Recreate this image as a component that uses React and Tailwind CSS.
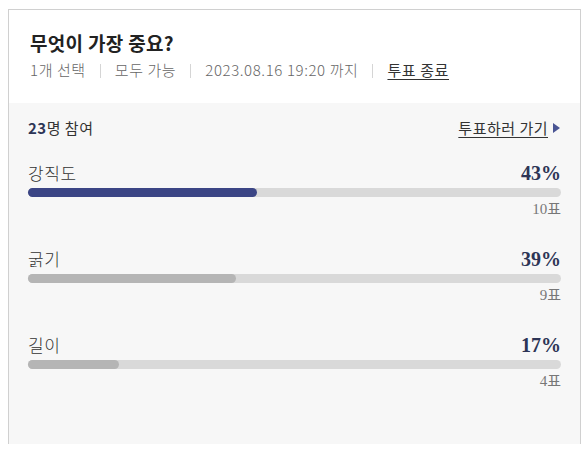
const options = [
  { label: "강직도", pct: 43, votes: 10, top: true },
  { label: "굵기", pct: 39, votes: 9 },
  { label: "길이", pct: 17, votes: 4 },
];

const kr = "font-['Noto_Sans_CJK_KR','Noto_Sans',sans-serif]";
const serif = "font-['Liberation_Serif','Noto_Sans_CJK_KR',serif]";

function Sep() {
  return <span className="mx-[14px] inline-block h-[14px] w-px bg-[#d5d5d5] align-[-2px]" />;
}

function OptionRow({ label, pct, votes, top }) {
  return (
    <div className="h-[86px]">
      <div className="flex items-end justify-between">
        <span className="text-[17px] font-light leading-[22px] tracking-[0.6px] text-[#333]">{label}</span>
        <span className={`${serif} text-[20px] font-bold leading-[22px] text-[#2d3556]`}>{pct}%</span>
      </div>
      <div className="mt-[4px] h-[9px] rounded-full bg-[#d9d9d9]">
        <div
          className={`h-full rounded-full ${top ? "bg-[#3b4585]" : "bg-[#b5b5b5]"}`}
          style={{ width: `${pct}%` }}
        />
      </div>
      <div className={`${serif} mt-[3px] text-right text-[15px] leading-[18px] text-[#777]`}>{votes}표</div>
    </div>
  );
}

export default function App() {
  return (
    <div className={`${kr} h-[451px] bg-white pl-[8px] pt-[9px]`}>
      <div className="flex h-[435px] w-[573px] flex-col border-x border-t border-[#d0d0d0]">
        <div className="h-[93px] px-[21px] pt-[20px]">
          <h1 className="text-[19px] font-bold leading-[26px] tracking-[0.3px] text-[#222]">무엇이 가장 중요?</h1>
          <p className="mt-[4px] text-[15px] font-light leading-[20px] tracking-[0.6px] text-[#666]">
            1개 선택<Sep />모두 가능<Sep />2023.08.16 19:20 까지<Sep />
            <span className="font-normal text-[#333] underline underline-offset-[3px]">투표 종료</span>
          </p>
        </div>
        <div className="flex-1 bg-[#f7f7f7] px-[19px] pt-[15px]">
          <div className="flex items-center justify-between pr-[1px] text-[15px] leading-[20px] tracking-[0.5px] text-[#333]">
            <span>
              <b className="font-bold text-[#2d3556]">23</b>명 참여
            </span>
            <span className="flex items-center">
              <span className="underline underline-offset-[3px]">투표하러 가기</span>
              <svg width="7" height="10" viewBox="0 0 7 10" className="ml-[5px]">
                <path d="M0 0 L7 5 L0 10 Z" fill="#4a5594" />
              </svg>
            </span>
          </div>
          <div className="mt-[24px]">
            {options.map((o) => (
              <OptionRow key={o.label} {...o} />
            ))}
          </div>
        </div>
      </div>
    </div>
  );
}
